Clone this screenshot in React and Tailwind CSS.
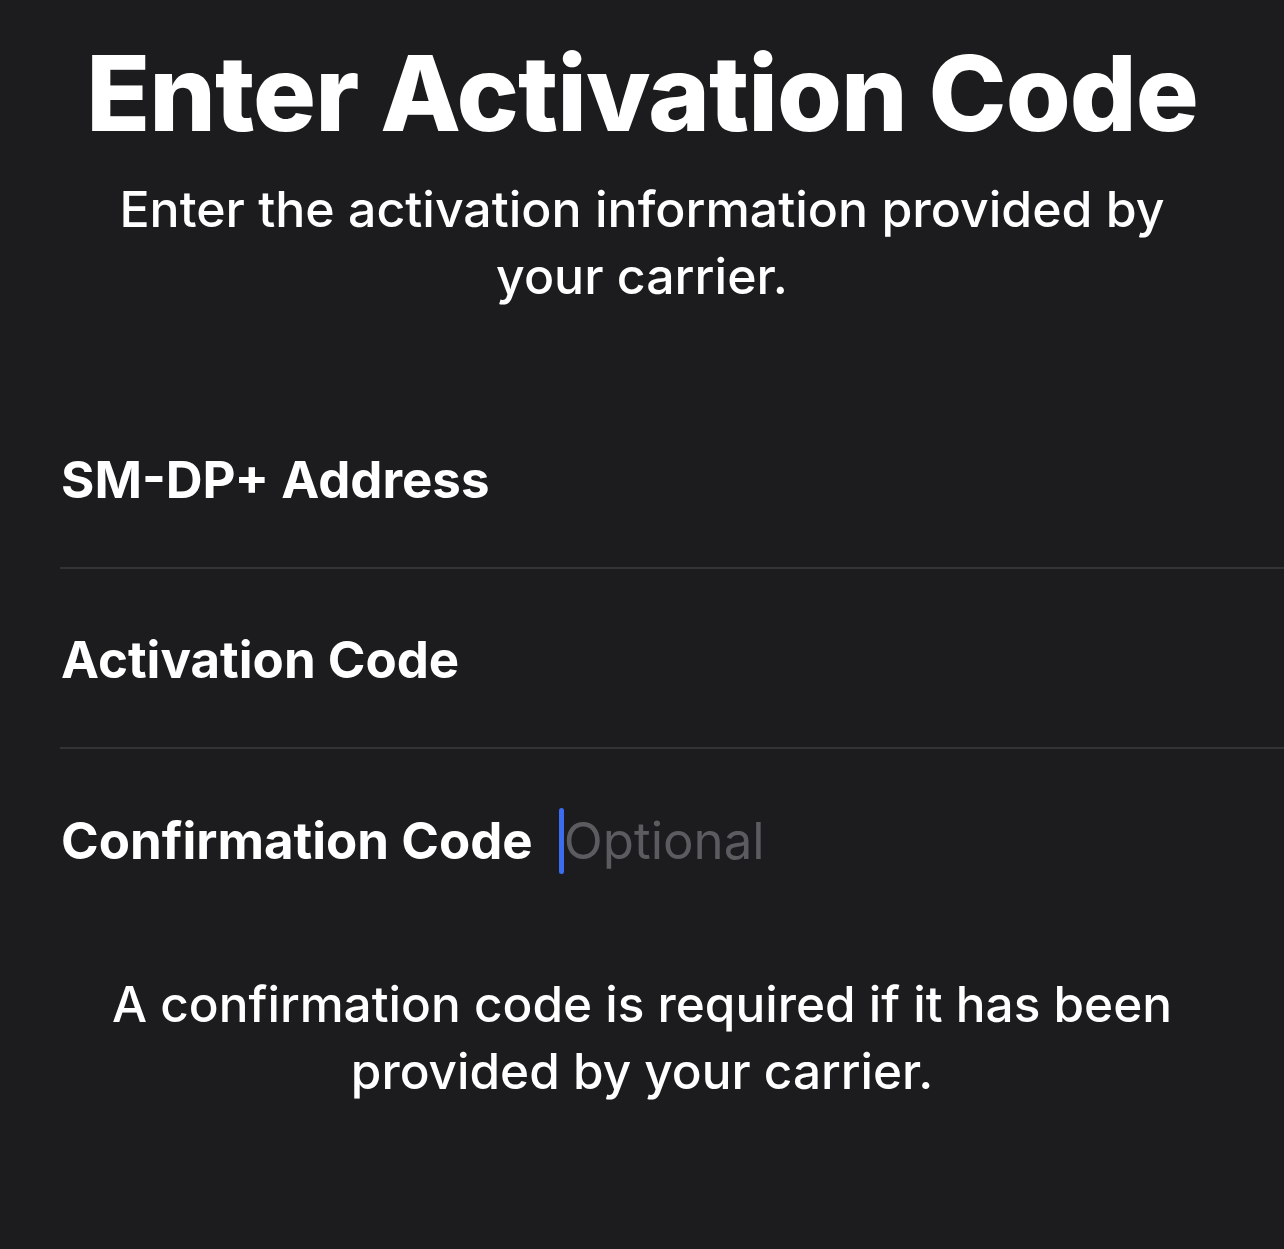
export default function App() {
  return (
    <div
      className="min-h-[1249px] w-full bg-[#1c1c1e] text-white overflow-hidden"
      style={{ fontFamily: 'Inter, "Noto Sans", sans-serif' }}
    >
      <h1 className="pt-[37px] text-center text-[105px] leading-[112px] font-extrabold tracking-[-1px]">
        Enter Activation Code
      </h1>
      <p className="mx-auto mt-[27px] max-w-[1100px] text-center text-[50px] leading-[67px] font-medium">
        Enter the activation information provided by your carrier.
      </p>

      <div className="mt-[79px] pl-[60px]">
        <div className="flex h-[180px] items-center pt-[4px] border-b-2 border-[#333336]">
          <span className="pl-[1px] text-[51px] font-bold">SM-DP+ Address</span>
        </div>
        <div className="flex h-[180px] items-center pt-[4px] border-b-2 border-[#333336]">
          <span className="pl-[1px] text-[51px] font-bold">Activation Code</span>
        </div>
        <div className="flex h-[180px] items-center pt-[4px]">
          <span className="pl-[1px] text-[51px] font-bold">Confirmation Code</span>
          <span className="ml-[26px] flex items-center">
            <span className="h-[66px] w-[5px] rounded-full bg-[#3c6df0]" />
            <span className="text-[51px] text-[#5b5b60]">Optional</span>
          </span>
        </div>
      </div>

      <p className="mx-auto mt-[42px] max-w-[1120px] text-center text-[49.5px] leading-[67px] font-medium">
        A confirmation code is required if it has been provided by your carrier.
      </p>
    </div>
  )
}
